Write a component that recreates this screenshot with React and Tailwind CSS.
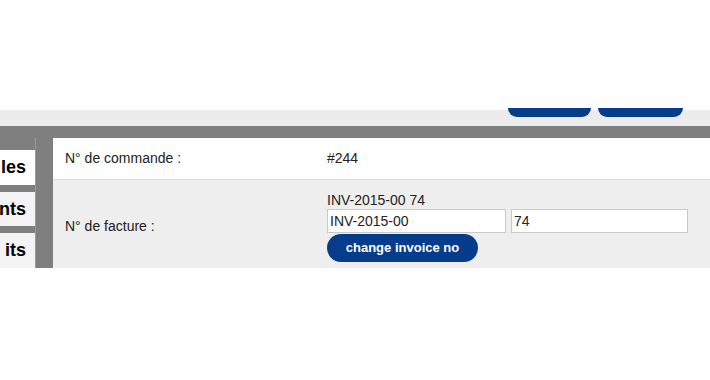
export default function App() {
  const font = { fontFamily: '"Liberation Sans", Arial, sans-serif' };
  return (
    <div className="w-[710px] h-[380px] bg-white flex flex-col text-[#222]" style={font}>
      {/* zone blanche du haut */}
      <div className="h-[108px]" />

      {/* barre claire avec boutons coupés */}
      <div className="h-[18px] border-t-2 border-white bg-[#ececec] flex items-start gap-[7px] pl-[508px]">
        <div className="-mt-[2px] w-[83px] h-[9px] bg-[#053c8c] rounded-b-[10px]" />
        <div className="-mt-[2px] w-[85px] h-[9px] bg-[#053c8c] rounded-b-[10px]" />
      </div>

      {/* barre grise */}
      <div className="h-[12px] bg-[#7f7f7f]" />

      {/* zone principale */}
      <div className="h-[130px] bg-[#7f7f7f] flex">
        {/* onglets (coupés à gauche) */}
        <div className="w-[36px] border-r border-[#9a9a9a] pt-[12px] flex flex-col gap-[7px]">
          <div className="h-[35px] bg-white flex items-center justify-end pr-[9px] whitespace-nowrap text-[18px] font-bold text-black">
            les
          </div>
          <div className="h-[34px] bg-[#f3f3f3] flex items-center justify-end pr-[9px] whitespace-nowrap text-[18px] font-bold text-black">
            nts
          </div>
          <div className="h-[35px] bg-[#f3f3f3] flex items-center justify-end pr-[9px] whitespace-nowrap text-[18px] font-bold text-black">
            its
          </div>
        </div>

        <div className="w-[17px]" />

        {/* contenu */}
        <div className="flex-1 flex flex-col text-[14px]">
          <div className="h-[42px] bg-white border-b border-[#dedede] flex items-center">
            <div className="w-[274px] pl-[12px]">N° de commande :</div>
            <div>#244</div>
          </div>
          <div className="flex-1 bg-[#eeeeee] flex">
            <div className="w-[274px] pl-[12px] flex items-center pt-[4px]">N° de facture :</div>
            <div className="pt-[12px] flex flex-col">
              <div className="leading-[16px] h-[16px]">INV-2015-00 74</div>
              <div className="flex gap-[5px] mt-[1px]">
                <input
                  className="w-[179px] h-[24px] bg-white border border-[#c9c9c9] px-[2px] text-[14px] text-[#222] outline-none"
                  style={font}
                  defaultValue="INV-2015-00"
                />
                <input
                  className="w-[177px] h-[24px] bg-white border border-[#c9c9c9] px-[2px] text-[14px] text-[#222] outline-none"
                  style={font}
                  defaultValue="74"
                />
              </div>
              <button
                className="mt-[1px] w-[151px] h-[28px] rounded-full bg-[#053c8c] text-white text-[13px] font-bold"
                style={font}
              >
                change invoice no
              </button>
            </div>
          </div>
        </div>
      </div>
    </div>
  );
}
